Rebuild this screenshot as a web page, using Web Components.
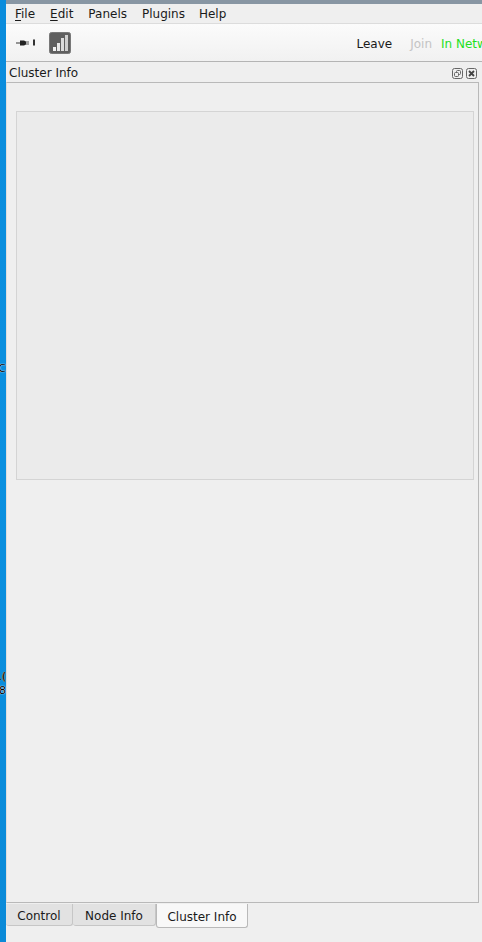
<!DOCTYPE html>
<html lang="en">

<head>
  <meta charset="UTF-8">
  <title>Cluster Info</title>
  <style>
    html, body { margin: 0; height: 100%; overflow: hidden; background: #efefef; }
    body { font: 12px "DejaVu Sans", sans-serif; color: #1a1a1a; }
  </style>
</head>

<body>
  <app-window>
    <menu-bar slot="menu"></menu-bar>
    <tool-bar slot="tools"></tool-bar>
    <dock-panel slot="dock" title="Cluster Info"></dock-panel>
    <tab-strip slot="tabs"></tab-strip>
  </app-window>

  <script>
    class AppWindow extends HTMLElement {
      connectedCallback() {
        this.attachShadow({ mode: 'open' }).innerHTML = `
      <style>
        :host { display: flex; width: 482px; height: 942px; overflow: hidden; }
        .desktop {
          width: 6px; flex: none; position: relative; overflow: hidden;
          background: linear-gradient(#0a8cdc, #0a90e0 50%, #0a8ad8);
          color: #000; font-size: 11px; line-height: 13px;
        }
        .desktop span { position: absolute; right: 0; white-space: nowrap; text-shadow: 0 0 1px #fff, 0 0 1px #fff; }
        .main { flex: 1; min-width: 0; display: flex; flex-direction: column; }
        .rim { height: 4px; flex: none; background: #8896a3; }
      </style>
      <div class="desktop">
        <span style="top:362px;">C</span>
        <span style="top:670px;text-shadow:0 0 1px #f2a850,0 0 1px #f2a850;">.(</span>
        <span style="top:684px;">8</span>
      </div>
      <div class="main">
        <div class="rim"></div>
        <slot name="menu"></slot>
        <slot name="tools"></slot>
        <slot name="dock"></slot>
        <slot name="tabs"></slot>
      </div>`;
      }
    }

    class MenuBar extends HTMLElement {
      connectedCallback() {
        // gaps measured off the reference, the hinted text there runs a bit wider
        const items = [['F', 'ile', 15], ['E', 'dit', 15], ['', 'Panels', 15], ['', 'Plugins', 14], ['', 'Help', 0]];
        this.attachShadow({ mode: 'open' }).innerHTML = `
      <style>
        :host { display: flex; height: 19px; padding-left: 9px; align-items: center;
          border-bottom: 1px solid #dcdcdc; background: #efefef; color: #1a1a1a; }
        u { text-underline-offset: 2px; }
      </style>
      ${items.map(([a, b, gap]) => `<span style="margin-right:${gap}px">${a ? `<u>${a}</u>` : ''}${b}</span>`).join('')}`;
      }
    }

    class ToolBar extends HTMLElement {
      connectedCallback() {
        this.attachShadow({ mode: 'open' }).innerHTML = `
      <style>
        :host { display: flex; align-items: center; height: 36px; padding: 1px 0 0 10px;
          background: linear-gradient(#fbfbfb, #f1f1f1);
          border-bottom: 1px solid #b4b4b4; white-space: nowrap; overflow: hidden; }
        .plug { margin-right: 13px; display: block; }
        .chart { display: block; }
        .spacer { flex: 1; }
        span { padding-top: 2px; }
        .leave { color: #1a1a1a; margin-right: 18px; }
        .join { color: #c4c4c4; margin-right: 9px; }
        .status { color: #1fe01f; width: 41px; overflow: hidden; }
      </style>
      <svg class="plug" width="20" height="8" viewBox="0 0 20 8">
        <path d="M0 4h4" stroke="#333" stroke-width="1" />
        <path d="M4 1.500h4l2 1v3l-2 1H4z" fill="#222" />
        <path d="M10 3h3M10 5h3" stroke="#555" stroke-width="1" />
        <path d="M18 0.500v6" stroke="#333" stroke-width="2" />
      </svg>
      <svg class="chart" width="22" height="22" viewBox="0 0 22 22">
        <rect x="0.500" y="0.500" width="21" height="21" rx="2" fill="#5f5f5f" stroke="#787878" />
        <rect x="4" y="15" width="3" height="4" fill="#f2f2f2" />
        <rect x="8" y="11" width="3" height="8" fill="#e8e8e8" />
        <rect x="12" y="6" width="3" height="13" fill="#dcdcdc" />
        <rect x="16" y="3" width="3" height="16" fill="#d0d0d0" />
      </svg>
      <span class="spacer"></span>
      <span class="leave">Leave</span>
      <span class="join">Join</span>
      <span class="status">In Network</span>`;
      }
    }

    class DockPanel extends HTMLElement {
      connectedCallback() {
        this.attachShadow({ mode: 'open' }).innerHTML = `
      <style>
        :host { display: flex; flex-direction: column; height: 841px; flex: none; background: #efefef; }
        .head { display: flex; align-items: center; height: 20px; flex: none; padding: 0 5px 0 3px; }
        .name { flex: 1; padding-top: 2px; }
        .btns { display: flex; gap: 3px; margin-top: 2px; }
        .btns svg { display: block; }
        .body { flex: 1; margin-right: 3px; padding: 28px 4px 0 9px; box-sizing: border-box;
          border: 1px solid #b9b9b9; border-left-color: #dedede; }
        .view { height: 369px; box-sizing: border-box; background: #ebebeb;
          border: 1px solid #d4d4d4; }
      </style>
      <div class="head">
        <span class="name">${this.getAttribute('title')}</span>
        <div class="btns">
          <svg width="11" height="11" viewBox="0 0 11 11" fill="none" stroke="#666">
            <rect x="0.500" y="0.500" width="10" height="10" rx="2" />
            <rect x="4.500" y="2.500" width="4" height="4" rx="1" />
            <rect x="2.500" y="4.500" width="4" height="4" rx="1" fill="#efefef" />
          </svg>
          <svg width="11" height="11" viewBox="0 0 11 11" fill="none" stroke="#666">
            <rect x="0.500" y="0.500" width="10" height="10" rx="2" />
            <path d="M3 3l5 5M8 3l-5 5" stroke="#444" stroke-width="1.800" />
          </svg>
        </div>
      </div>
      <div class="body"><div class="view"></div></div>`;
      }
    }

    class TabStrip extends HTMLElement {
      connectedCallback() {
        const tabs = [['Control', 67], ['Node Info', 83], ['Cluster Info', 92]];
        this.attachShadow({ mode: 'open' }).innerHTML = `
      <style>
        :host { display: flex; align-items: flex-start; height: 37px; flex: none; box-sizing: border-box; padding-top: 1px; }
        .tab { box-sizing: border-box; height: 22px; display: flex; align-items: center; justify-content: center;
          padding-top: 3px; background: #e2e2e2; border: 1px solid #c6c6c6; border-top: 0; border-left: 0;
          border-radius: 0 0 3px 3px; }
        .tab.on { height: 24px; background: #f8f8f8; border: 1px solid #b9b9b9; border-top: 0; padding-top: 3px; }
      </style>
      ${tabs.map(([t, w], i) => `<div class="tab${i === 2 ? ' on' : ''}" style="width:${w}px">${t}</div>`).join('')}`;
      }
    }

    customElements.define('app-window', AppWindow);
    customElements.define('menu-bar', MenuBar);
    customElements.define('tool-bar', ToolBar);
    customElements.define('dock-panel', DockPanel);
    customElements.define('tab-strip', TabStrip);
  </script>
</body>

</html>
